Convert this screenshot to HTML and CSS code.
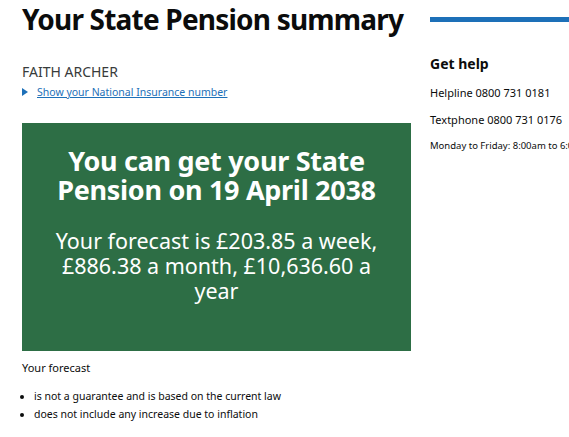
FILE: index.html
```html
<!DOCTYPE html>
<html>
<head>
<meta charset="utf-8">
<link rel="stylesheet" href="styles.css">
</head>
<body>
<div class="page">
  <main class="main">
    <h1 class="title">Your State Pension summary</h1>
    <p class="name">FAITH ARCHER</p>
    <div class="details"><span class="tri"></span><a class="link" href="#">Show your National Insurance number</a></div>
    <div class="panel">
      <h2 class="panel-title">You can get your State Pension on 19 April 2038</h2>
      <p class="panel-body">Your forecast is £203.85 a week, £886.38 a month, £10,636.60 a year</p>
    </div>
    <p class="small">Your forecast</p>
    <ul class="list">
      <li>is not a guarantee and is based on the current law</li>
      <li>does not include any increase due to inflation</li>
    </ul>
  </main>
  <aside class="side">
    <div class="bar"></div>
    <h2 class="help">Get help</h2>
    <p class="side-line">Helpline 0800 731 0181</p>
    <p class="side-line">Textphone 0800 731 0176</p>
    <p class="side-small">Monday to Friday: 8:00am to 6:00pm</p>
  </aside>
</div>
</body>
</html>
```
FILE: styles.css
```css
html, body { margin: 0; padding: 0; background: #fff; }
body { font-family: "Noto Sans", "Liberation Sans", sans-serif; color: #0b0c0c; overflow: hidden; width: 569px; height: 437px; }
.page { display: flex; padding-left: 22px; gap: 19px; }
.main { width: 389px; flex: none; }
.title { margin: 0; padding-top: 1px; font-size: 28px; line-height: 36px; font-weight: 700; letter-spacing: -0.8px; white-space: nowrap; }
.name { margin: 26px 0 0; font-size: 14px; line-height: 18px; color: #383b3b; }
.details { display: flex; align-items: center; margin-top: 4px; font-size: 10.5px; line-height: 14px; }
.tri { width: 0; height: 0; border-left: 6px solid #1d70b8; border-top: 4px solid transparent; border-bottom: 4px solid transparent; margin-right: 9px; }
.link { color: #1d70b8; text-decoration: underline; }
.panel { margin-top: 24px; background: #2d6e45; color: #fff; text-align: center; height: 228px; box-sizing: border-box; padding: 23px 20px 0; }
.panel-title { margin: 0; font-size: 27px; line-height: 29px; font-weight: 700; letter-spacing: -0.3px; }
.panel-body { margin: 24px 0 0; font-size: 21.5px; line-height: 25px; }
.small { margin: 10px 0 0; font-size: 11px; line-height: 14px; }
.list { margin: 12px 0 0; padding-left: 12px; font-size: 10.5px; line-height: 18px; }
.side { flex: 1; padding-top: 17px; }
.bar { height: 5px; background: #1d70b8; }
.help { margin: 33px 0 0; font-size: 14px; line-height: 18px; font-weight: 700; }
.side-line { margin: 12px 0 0; font-size: 11px; line-height: 15px; white-space: nowrap; }
.side-small { margin: 13px 0 0; font-size: 9.5px; line-height: 12px; white-space: nowrap; }
```
